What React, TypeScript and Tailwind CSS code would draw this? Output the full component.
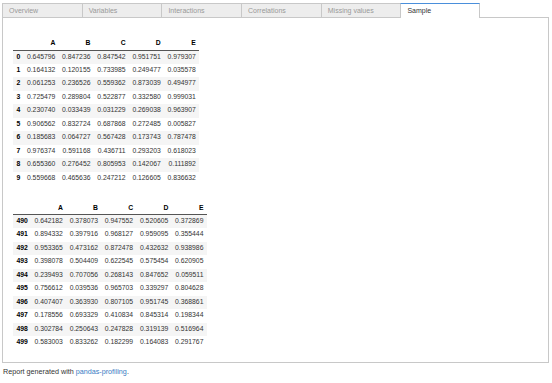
import React from 'react';

const tabs = ['Overview', 'Variables', 'Interactions', 'Correlations', 'Missing values', 'Sample'];

const head: [string, string, string, string, string, string][] = [
  ['0', '0.645796', '0.847236', '0.847542', '0.951751', '0.979307'],
  ['1', '0.164132', '0.120155', '0.733985', '0.249477', '0.035578'],
  ['2', '0.061253', '0.236526', '0.559362', '0.873039', '0.494977'],
  ['3', '0.725479', '0.289804', '0.522877', '0.332580', '0.999031'],
  ['4', '0.230740', '0.033439', '0.031229', '0.269038', '0.963907'],
  ['5', '0.906562', '0.832724', '0.687868', '0.272485', '0.005827'],
  ['6', '0.185683', '0.064727', '0.567428', '0.173743', '0.787478'],
  ['7', '0.976374', '0.591168', '0.436711', '0.293203', '0.618023'],
  ['8', '0.655360', '0.276452', '0.805953', '0.142067', '0.111892'],
  ['9', '0.559668', '0.465636', '0.247212', '0.126605', '0.836632'],
];

const tail: [string, string, string, string, string, string][] = [
  ['490', '0.642182', '0.378073', '0.947552', '0.520605', '0.372869'],
  ['491', '0.894332', '0.397916', '0.968127', '0.959095', '0.355444'],
  ['492', '0.953365', '0.473162', '0.872478', '0.432632', '0.938986'],
  ['493', '0.398078', '0.504409', '0.622545', '0.575454', '0.620905'],
  ['494', '0.239493', '0.707056', '0.268143', '0.847652', '0.059511'],
  ['495', '0.756612', '0.039536', '0.965703', '0.339297', '0.804628'],
  ['496', '0.407407', '0.363930', '0.807105', '0.951745', '0.368861'],
  ['497', '0.178556', '0.693329', '0.410834', '0.845314', '0.198344'],
  ['498', '0.302784', '0.250643', '0.247828', '0.319139', '0.516964'],
  ['499', '0.583003', '0.833262', '0.182299', '0.164083', '0.291767'],
];

const SampleTable: React.FC<{ rows: string[][] }> = ({ rows }) => (
  <table className="border-collapse text-[6.8px] leading-none text-[#333]">
    <thead>
      <tr className="h-[12.5px] border-b border-[#555]">
        <th className="px-[3.4px]"></th>
        {['A', 'B', 'C', 'D', 'E'].map((c) => (
          <th key={c} className="px-[3.4px] text-right font-bold text-black">
            {c}
          </th>
        ))}
      </tr>
    </thead>
    <tbody>
      {rows.map((r, i) => (
        <tr key={r[0]} className={`h-[13.5px] ${i % 2 === 0 ? 'bg-[#f5f5f5]' : 'bg-white'}`}>
          <th className="px-[3.4px] text-left font-bold text-black">{r[0]}</th>
          {r.slice(1).map((v, j) => (
            <td key={j} className="px-[3.4px] text-right">
              {v}
            </td>
          ))}
        </tr>
      ))}
    </tbody>
  </table>
);

export default function App() {
  return (
    <div className="w-[552px] h-[383px] bg-white pt-[3px] pl-[2px] pr-[3px] font-['Liberation_Sans',Arial,sans-serif]">
      <div className="flex h-[15px]">
        {tabs.map((t) =>
          t === 'Sample' ? (
            <div
              key={t}
              className="w-[79.7px] shrink-0 border-t border-t-[#4a8fdb] border-x border-[#c8c8c8] bg-white pl-[6px] text-[7px] leading-[13px] text-[#333]"
            >
              {t}
            </div>
          ) : (
            <div
              key={t}
              className="w-[79.7px] shrink-0 border-l border-y border-[#c8c8c8] bg-[#ededed] pl-[6px] text-[7px] leading-[13px] text-[#999]"
            >
              {t}
            </div>
          )
        )}
        <div className="flex-1 border-b border-[#c8c8c8]"></div>
      </div>
      <div className="h-[345px] border-x border-b border-[#c8c8c8] pl-[10px] pt-[19.5px] flex flex-col items-start gap-[17px]">
        <SampleTable rows={head} />
        <SampleTable rows={tail} />
      </div>
      <p className="mt-[4px] pl-[1px] text-[7.2px] leading-[10px] text-[#333]">
        Report generated with <a className="text-[#3b7cc4]">pandas-profiling</a>.
      </p>
    </div>
  );
}
